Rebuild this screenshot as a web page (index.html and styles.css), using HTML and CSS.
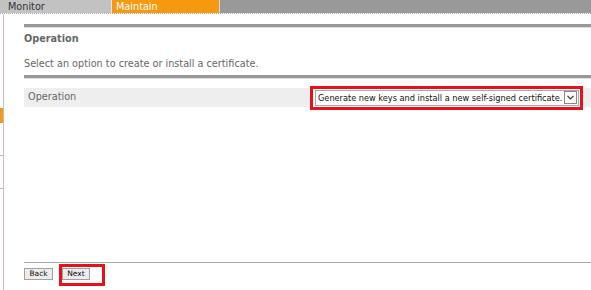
FILE: index.html
```html
<!DOCTYPE html>
<html lang="en">
<head>
  <meta charset="UTF-8">
  <meta name="viewport" content="width=device-width, initial-scale=1.0">
  <title>Maintain - Certificate</title>
  <link rel="stylesheet" href="styles.css">
</head>
<body>
  <!-- Top tabs -->
  <div class="tabs">
    <div class="tab monitor">Monitor</div>
    <div class="tab maintain">Maintain</div>
    <div class="tab rest"></div>
  </div>

  <div class="frame">
    <div class="side">
      <div class="side-mark"></div>
      <div class="side-tick first"></div>
      <div class="side-tick"></div>
    </div>

    <div class="content">
      <div class="rule-thick top"></div>
      <h2>Operation</h2>
      <p class="intro">Select an option to create or install a certificate.</p>
      <div class="rule-thick"></div>

      <div class="form-row">
        <span class="form-label">Operation</span>
        <div class="highlight">
          <div class="select">
            <span class="select-text">Generate new keys and install a new self-signed certificate.</span>
            <span class="select-btn">
              <svg width="7" height="5" viewBox="0 0 7 5"><path d="M0.5 0.8 L3.5 3.8 L6.5 0.8" fill="none" stroke="#333" stroke-width="1.2"/></svg>
            </span>
          </div>
        </div>
      </div>

      <div class="spacer"></div>

      <div class="rule-thin"></div>
      <div class="buttons">
        <button class="btn">Back</button>
        <div class="highlight next-box">
          <button class="btn">Next</button>
        </div>
      </div>
    </div>
  </div>
</body>
</html>
```

FILE: styles.css
```css
/* General Styles */
body {
  margin: 0;
  height: 290px;
  overflow: hidden;
  font-family: "DejaVu Sans", Verdana, sans-serif;
  font-size: 9.7px;
  color: #666;
  background: #fff;
  display: flex;
  flex-direction: column;
}

/* Tabs */
.tabs {
  display: flex;
  height: 13px;
  border-bottom: 1px dotted #aaa;
  background: #fff;
}

.tab {
  line-height: 13px;
  font-size: 9.7px;
}

.tab.monitor {
  width: 103px;
  padding-left: 8px;
  background: #c2c2c2;
  color: #333;
  border-right: 1px solid #e6e6e6;
}

.tab.maintain {
  width: 103px;
  padding-left: 4px;
  background: #f7990f;
  color: #fff;
  border-right: 1px solid #d8d8d8;
}

.tab.rest {
  flex: 1;
  background: #999;
}

/* Frame */
.frame {
  flex: 1;
  display: flex;
}

.side {
  width: 3px;
  border-right: 1px solid #cdbdbd;
  display: flex;
  flex-direction: column;
}

.side-mark {
  margin-top: 94px;
  height: 15px;
  background: #f39a1a;
}

.side-tick {
  height: 1px;
  background: #bbb;
  margin-top: 32px;
}

.side-tick.first {
  margin-top: 32px;
}

.content {
  flex: 1;
  padding-left: 20px;
  display: flex;
  flex-direction: column;
}

.rule-thick {
  height: 3px;
  background: #999;
  border-bottom: 1px solid #ddd;
}

.rule-thick.top {
  margin-top: 10px;
}

.content h2 {
  margin: 5px 0 0;
  font-size: 9.7px;
  font-weight: bold;
  color: #666;
  line-height: 12px;
}

.intro {
  margin: 13px 0 0;
  line-height: 12px;
}

.content .intro + .rule-thick {
  margin-top: 5px;
}

/* Form row */
.form-row {
  margin-top: 9px;
  height: 19px;
  background: #eee;
  display: flex;
  align-items: center;
  justify-content: space-between;
}

.form-label {
  padding-left: 4px;
  padding-bottom: 2px;
}

.highlight {
  border: 3px solid #e8101a;
}

.form-row .highlight {
  margin-right: 8px;
  padding: 1px 1px 1px 2px;
  background: #fff;
}

.select {
  display: flex;
  align-items: center;
  width: 260px;
  height: 14px;
  border: 1px solid #a8a8a8;
  background: #fff;
  padding-left: 2px;
}

.select-text {
  flex: 1;
  font-size: 8.2px;
  color: #111;
  white-space: nowrap;
  overflow: hidden;
}

.select-btn {
  width: 11px;
  height: 11px;
  border: 1px solid #888;
  margin-right: 1px;
  display: flex;
  align-items: center;
  justify-content: center;
  background: #fafafa;
}

.spacer {
  flex: 1;
}

/* Footer */
.rule-thin {
  height: 1px;
  background: #aaa;
}

.buttons {
  display: flex;
  align-items: flex-start;
  margin-top: 1px;
  margin-bottom: 4px;
  gap: 6px;
}

.btn {
  font-family: "DejaVu Sans", Verdana, sans-serif;
  font-size: 7.5px;
  color: #111;
  height: 12px;
  width: 29px;
  padding: 0;
  margin-top: 4px;
  background: #ececec;
  border: 1px solid #a0a0a0;
  line-height: 10px;
}

.next-box {
  padding: 0 12px 3px 0;
}

.next-box .btn {
  margin-top: 1px;
  width: 28px;
}
```
